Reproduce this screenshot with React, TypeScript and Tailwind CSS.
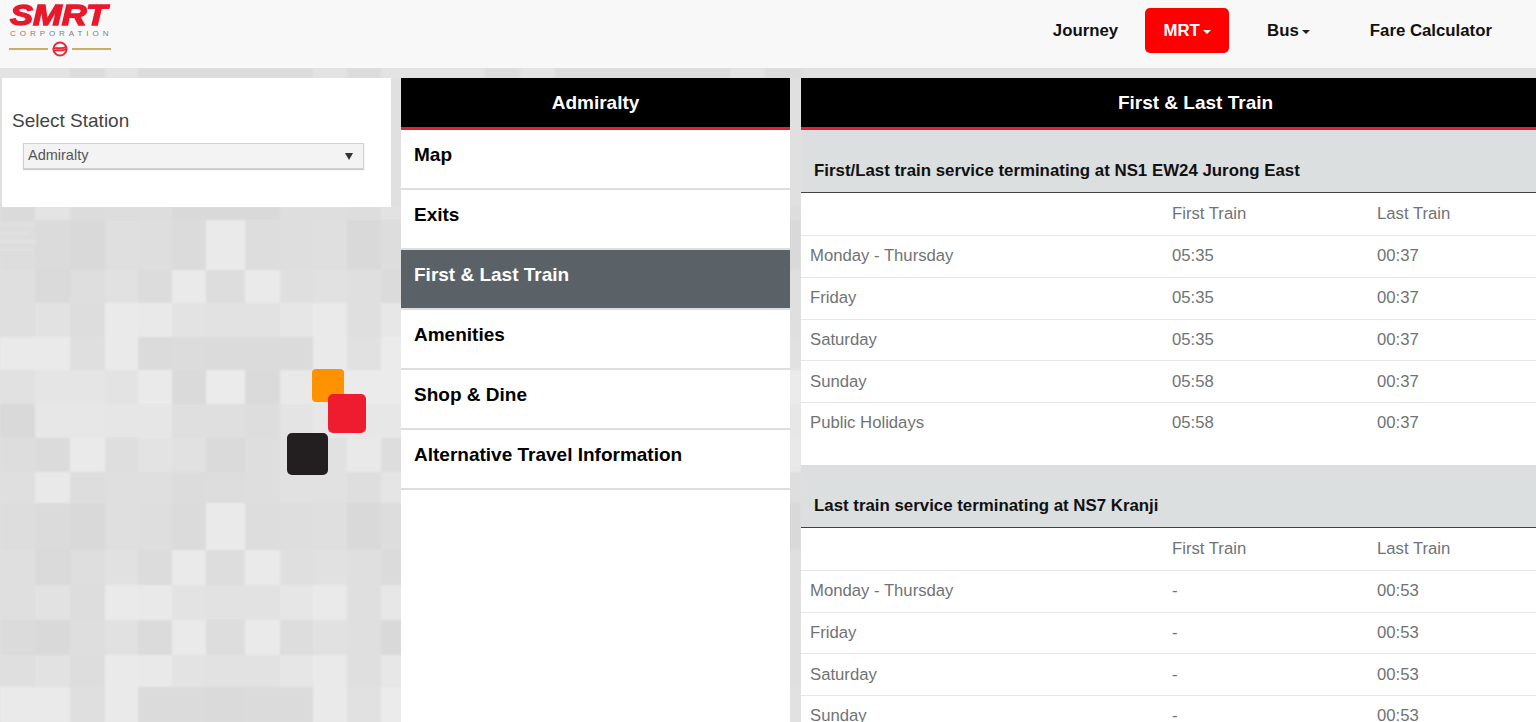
const font = { fontFamily: '"Liberation Sans", Arial, sans-serif' };

const tileCols = [0, 35, 70, 105, 138, 172, 206, 245, 280, 313, 347, 381, 415, 450, 485, 520, 555, 590, 625, 660, 695, 730, 765, 800];
const tileRows: [number, number, string[]][] = [
  [0, 10, ["e3", "e3", "dc", "e4", "dc", "dc", "dc", "dc", "dc", "e3", "dc", "e3"]],
  [139, 152, ["da", "e4", "dc", "dd", "dd", "d9", "d9", "d9", "de", "de", "dd", "e2"]],
  [152, 202, ["dd", "db", "d9", "df", "de", "db", "ea", "dd", "de", "df", "d9", "dd"]],
  [202, 235, ["df", "da", "de", "e1", "dc", "ea", "dd", "ea", "df", "e1", "df", "db"]],
  [235, 269, ["df", "e2", "dd", "ea", "e9", "e3", "e2", "e2", "e6", "ea", "df", "e7"]],
  [269, 302, ["ea", "ea", "df", "ea", "db", "dc", "db", "db", "db", "ea", "e1", "eb"]],
  [302, 336, ["e1", "e5", "e5", "e3", "ea", "da", "eb", "da", "e9", "ea", "eb", "eb"]],
  [336, 370, ["d9", "e7", "e7", "e6", "e6", "df", "df", "dd", "e4", "e7", "e7", "e7"]],
  [370, 404, ["dd", "db", "ea", "de", "e3", "e1", "da", "de", "e1", "e1", "e9", "dd"]],
  [404, 435, ["df", "e9", "dd", "df", "df", "dc", "dd", "de", "e1", "e1", "de", "e5"]],
  [435, 482, ["dd", "db", "d9", "df", "de", "db", "ea", "dd", "de", "df", "d9", "dd"]],
  [482, 517, ["df", "da", "de", "e1", "dc", "ea", "dd", "ea", "df", "e1", "df", "db"]],
  [517, 552, ["df", "e2", "dd", "ea", "e9", "e3", "e2", "e2", "e6", "ea", "df", "e7"]],
  [552, 587, ["db", "d9", "de", "e1", "db", "ea", "dd", "ea", "dd", "e1", "df", "d9"]],
  [587, 619, ["df", "e2", "dd", "ea", "e9", "e3", "e2", "e2", "e6", "ea", "df", "e7"]],
  [619, 654, ["ea", "ea", "df", "ea", "db", "db", "da", "db", "db", "ea", "e1", "eb"]],
];

function Mosaic() {
  return (
    <svg className="absolute left-0 top-0" width="1536" height="654" aria-hidden="true">
      <rect width="1536" height="654" fill="#e0e0e0" />
      <g style={{ filter: "blur(1px)" }}>
        {tileRows.map(([top, bottom, shades]) =>
          tileCols.slice(0, -1).map((x, i) => (
            <rect
              key={`${top}-${x}`}
              x={x}
              y={top}
              width={tileCols[i + 1] - x + 1}
              height={bottom - top + 1}
              fill={`#${shades[i % shades.length].repeat(3)}`}
            />
          )),
        )}
        <rect x="0" y="156" width="35" height="1" fill="#e6e6e6" />
        <rect x="0" y="165" width="30" height="1" fill="#e6e6e6" />
        <rect x="0" y="173" width="37" height="1" fill="#eaeaea" />
        <rect x="0" y="181" width="32" height="1" fill="#e4e4e4" />
      </g>
      <rect x="312" y="301" width="32" height="33" rx="4" fill="#ff9200" />
      <rect x="328" y="326" width="38" height="39" rx="5" fill="#ee1c2e" />
      <rect x="287" y="365" width="41" height="42" rx="5" fill="#231f20" />
    </svg>
  );
}

function Logo() {
  return (
    <div className="ml-[9px] flex w-[102px] flex-col items-start">
      <div className="ml-[1px] h-[27px] origin-left text-[30px] leading-[27px] font-bold text-[#e8192c] italic [-webkit-text-stroke:1.4px_#e8192c] scale-x-[1.15]">
        SMRT
      </div>
      <div className="mt-[1px] ml-[1px] text-[8px] leading-[9px] tracking-[3.95px] whitespace-nowrap text-[#7b8185]">CORPORATION</div>
      <div className="mt-[3px] flex w-full items-center">
        <span className="h-[2px] flex-1 bg-[#c9ae6a]" />
        <svg width="24" height="16" viewBox="0 0 24 16" aria-hidden="true">
          <circle cx="12" cy="8" r="6.5" fill="none" stroke="#e8293a" strokeWidth="2" />
          <path d="M5 8.5C8 4.5 11 10 19 5.5" stroke="#e8293a" strokeWidth="2" fill="none" />
          <path d="M5 10.5C9 7 13 12 19 7.5" stroke="#e8293a" strokeWidth="2" fill="none" />
        </svg>
        <span className="h-[2px] flex-1 bg-[#c9ae6a]" />
      </div>
    </div>
  );
}

function Caret({ color }: { color: string }) {
  return (
    <svg className="mt-[2px] ml-[3px]" width="8" height="4" viewBox="0 0 8 4" aria-hidden="true">
      <path d="M0 0h8L4 4z" fill={color} />
    </svg>
  );
}

function Header() {
  return (
    <header className="flex h-[68px] items-start justify-between bg-[#f8f8f8] pt-[1px]">
      <Logo />
      <nav className="mt-[7px] mr-[44px] flex h-[45px] items-center text-[16.8px] font-bold text-[#111]">
        <a className="mr-[27px]">Journey</a>
        <a className="flex h-full w-[84px] items-center justify-center rounded-[5px] bg-[#ff0000] text-white">
          MRT
          <Caret color="#fff" />
        </a>
        <a className="ml-[38px] flex items-center">
          Bus
          <Caret color="#222" />
        </a>
        <a className="ml-[60px]">Fare Calculator</a>
      </nav>
    </header>
  );
}

function PanelHead({ title, overflow }: { title: string; overflow?: boolean }) {
  return (
    <div
      className={
        overflow
          ? "flex h-[52px] shrink-0 items-center justify-center border-b-[3px] border-[#e2203a] bg-black pt-[1px] pl-[54px] text-[19px] font-bold text-white"
          : "flex h-[52px] shrink-0 items-center justify-center border-b-[3px] border-[#e2203a] bg-black pt-[1px] text-[19px] font-bold text-white"
      }
    >
      {title}
    </div>
  );
}

const menu = ["Map", "Exits", "First & Last Train", "Amenities", "Shop & Dine", "Alternative Travel Information"];

function Sidebar() {
  return (
    <aside className="ml-[2px] h-[129px] w-[389px] shrink-0 bg-white pt-[31px]">
      <div className="pl-[10px] text-[19px] leading-[24px] text-[#444]">Select Station</div>
      <div className="mt-[10px] ml-[21px] flex h-[26px] w-[341px] items-center justify-between border border-[#d0d0d0] bg-[#f3f3f3] pr-[10px] pl-[4px] text-[14.5px] text-[#555] shadow-[0_1px_1px_rgba(0,0,0,0.2)]">
        Admiralty
        <svg width="8" height="7" viewBox="0 0 8 7" aria-hidden="true">
          <path d="M0 0h8L4 7z" fill="#333" />
        </svg>
      </div>
    </aside>
  );
}

function Menu() {
  return (
    <section className="ml-[10px] flex w-[389px] shrink-0 flex-col bg-white">
      <PanelHead title="Admiralty" />
      {menu.map((item) => (
        <div
          key={item}
          className={
            item === "First & Last Train"
              ? "flex h-[60px] items-start border-b-2 border-[#dcdfe0] bg-[#5a6267] pt-[13px] pl-[13px] text-[19px] leading-[24px] font-bold text-white"
              : "flex h-[60px] items-start border-b-2 border-[#dcdfe0] bg-white pt-[13px] pl-[13px] text-[19px] leading-[24px] font-bold text-black"
          }
        >
          {item}
        </div>
      ))}
    </section>
  );
}

function Row({ label, first, last }: { label: string; first: string; last: string }) {
  return (
    <div className="flex h-[41.75px] items-center border-t border-[#e6e8e8] pb-[1px] pl-[9px] text-[16.7px] text-[#707375]">
      <span className="w-[362px]">{label}</span>
      <span className="w-[205px]">{first}</span>
      <span>{last}</span>
    </div>
  );
}

function TrainTable({ title, rows }: { title: string; rows: string[][] }) {
  return (
    <div>
      <div className="flex h-[63px] items-end border-b border-[#3f4345] bg-[#dcdfe0] pb-[10px] pl-[13px] text-[16.85px] leading-[22px] font-bold text-[#111]">
        {title}
      </div>
      <div className="flex h-[42px] items-center pb-[1px] pl-[9px] text-[16.7px] text-[#707375]">
        <span className="w-[362px]" />
        <span className="w-[205px]">First Train</span>
        <span>Last Train</span>
      </div>
      {rows.map(([label, first, last]) => (
        <Row key={label} label={label} first={first} last={last} />
      ))}
    </div>
  );
}

const jurong = [
  ["Monday - Thursday", "05:35", "00:37"],
  ["Friday", "05:35", "00:37"],
  ["Saturday", "05:35", "00:37"],
  ["Sunday", "05:58", "00:37"],
  ["Public Holidays", "05:58", "00:37"],
];

const kranji = [
  ["Monday - Thursday", "-", "00:53"],
  ["Friday", "-", "00:53"],
  ["Saturday", "-", "00:53"],
  ["Sunday", "-", "00:53"],
];

function Timetable() {
  return (
    <section className="ml-[11px] flex min-w-0 flex-1 flex-col overflow-hidden bg-white">
      <PanelHead title="First & Last Train" overflow />
      <TrainTable title="First/Last train service terminating at NS1 EW24 Jurong East" rows={jurong} />
      <div className="h-[21px] shrink-0" />
      <TrainTable title="Last train service terminating at NS7 Kranji" rows={kranji} />
    </section>
  );
}

export default function App() {
  return (
    <div className="flex h-[722px] flex-col overflow-hidden" style={font}>
      <Header />
      <main className="relative flex min-h-0 flex-1 items-stretch">
        <Mosaic />
        <div className="relative flex min-w-0 flex-1 items-start pt-[10px]">
          <Sidebar />
          <div className="flex h-full min-w-0 flex-1 self-stretch">
            <Menu />
            <Timetable />
          </div>
        </div>
      </main>
    </div>
  );
}
